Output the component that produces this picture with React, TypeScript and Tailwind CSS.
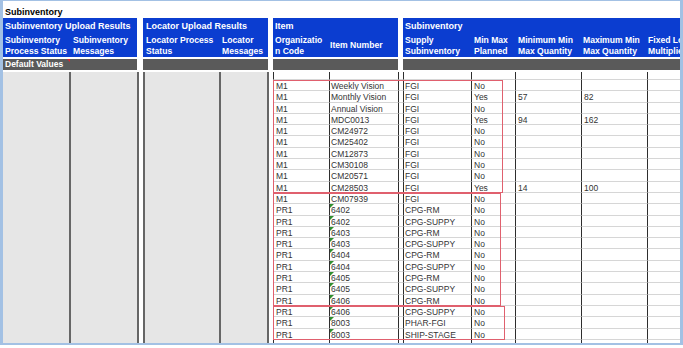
import React from 'react';

type Row = [string, string, string, string, string?, string?];

// rows grouped by the red highlight box drawn around them, with the box width
const groups: { width: string; rows: Row[] }[] = [
  {
    width: 'w-[230px]',
    rows: [
      ['M1', 'Weekly Vision', 'FGI', 'No'],
      ['M1', 'Monthly Vision', 'FGI', 'Yes', '57', '82'],
      ['M1', 'Annual Vision', 'FGI', 'No'],
      ['M1', 'MDC0013', 'FGI', 'Yes', '94', '162'],
      ['M1', 'CM24972', 'FGI', 'No'],
      ['M1', 'CM25402', 'FGI', 'No'],
      ['M1', 'CM12873', 'FGI', 'No'],
      ['M1', 'CM30108', 'FGI', 'No'],
      ['M1', 'CM20571', 'FGI', 'No'],
      ['M1', 'CM28503', 'FGI', 'Yes', '14', '100'],
    ],
  },
  {
    width: 'w-[228px]',
    rows: [
      ['M1', 'CM07939', 'FGI', 'No'],
      ['PR1', '6402', 'CPG-RM', 'No'],
      ['PR1', '6402', 'CPG-SUPPY', 'No'],
      ['PR1', '6403', 'CPG-RM', 'No'],
      ['PR1', '6403', 'CPG-SUPPY', 'No'],
      ['PR1', '6404', 'CPG-RM', 'No'],
      ['PR1', '6404', 'CPG-SUPPY', 'No'],
      ['PR1', '6405', 'CPG-RM', 'No'],
      ['PR1', '6405', 'CPG-SUPPY', 'No'],
      ['PR1', '6406', 'CPG-RM', 'No'],
    ],
  },
  {
    width: 'w-[232px]',
    rows: [
      ['PR1', '6406', 'CPG-SUPPY', 'No'],
      ['PR1', '8003', 'PHAR-FGI', 'No'],
      ['PR1', '8003', 'SHIP-STAGE', 'No'],
    ],
  },
];

const cell = 'pt-[1px] border-b border-b-[#d6d6d6] border-r border-r-[#2e2e2e] overflow-hidden whitespace-nowrap';

// one spreadsheet row across the Item and Subinventory blocks
const DataRow = ({ row, h }: { row?: Row; h: string }) => {
  const [org, item, supply, planned, min, max] = row ?? ['', '', '', ''];
  const numeric = /^\d+$/.test(item);
  return (
    <div className={`flex shrink-0 ${h}`}>
      <div className={`w-[57px] border-l border-l-[#2e2e2e] pl-[2px] ${cell}`}>{org}</div>
      <div className={`relative w-[69px] pl-[1px] ${cell}`}>
        {numeric && (
          <span className="absolute left-0 top-0 border-t-[4px] border-r-[4px] border-t-[#2f8f2f] border-r-transparent" />
        )}
        {item}
      </div>
      <div className="w-[4px] border-b border-b-[#d6d6d6]" />
      <div className={`w-[69px] border-l border-l-[#2e2e2e] pl-[1px] ${cell}`}>{supply}</div>
      <div className={`w-[44px] pl-[2px] ${cell}`}>{planned}</div>
      <div className={`w-[66px] pl-[2px] ${cell}`}>{min}</div>
      <div className={`w-[66px] pl-[2px] ${cell}`}>{max}</div>
      <div className="flex-1 border-b border-b-[#d6d6d6]" />
    </div>
  );
};

const SubHead = ({ w, pad, lines }: { w: string; pad: string; lines: string[] }) => (
  <div className={`${w} ${pad} flex flex-col justify-center leading-[10.5px] whitespace-nowrap`}>
    {lines.map((l) => (
      <span key={l}>{l}</span>
    ))}
  </div>
);

export default function App() {
  return (
    <div className="w-[683px] h-[348px] bg-white overflow-hidden font-['Liberation_Sans',Arial,sans-serif]">
      <div className="w-[683px] h-[345px] border-t border-l-[3px] border-r-[3px] border-b-2 border-[#a3c1e4] flex flex-col">
        {/* sheet title */}
        <div className="h-[17px] shrink-0 pl-[2px] pt-[6px] text-[9px] font-bold leading-[10px] text-black">Subinventory</div>

        {/* blue header blocks */}
        <div className="flex h-[39px] shrink-0 text-white">
          <div className="w-[134px] bg-[#0b3dd0] flex flex-col">
            <div className="h-[16px] pl-[2px] pt-[3px] text-[9px] font-bold leading-[11px]">Subinventory Upload Results</div>
            <div className="flex flex-1 text-[8.6px] font-bold">
              <SubHead w="w-[68px]" pad="pl-[2px]" lines={['Subinventory', 'Process Status']} />
              <SubHead w="flex-1" pad="pl-[2px]" lines={['Subinventory', 'Messages']} />
            </div>
          </div>
          <div className="w-[6px]" />
          <div className="w-[125px] bg-[#0b3dd0] flex flex-col">
            <div className="h-[16px] pl-[3px] pt-[3px] text-[9px] font-bold leading-[11px]">Locator Upload Results</div>
            <div className="flex flex-1 text-[8.6px] font-bold">
              <SubHead w="w-[76px]" pad="pl-[3px]" lines={['Locator Process', 'Status']} />
              <SubHead w="flex-1" pad="pl-[3px]" lines={['Locator', 'Messages']} />
            </div>
          </div>
          <div className="w-[5px]" />
          <div className="w-[125px] bg-[#0b3dd0] flex flex-col">
            <div className="h-[16px] pl-[2px] pt-[3px] text-[9px] font-bold leading-[11px]">Item</div>
            <div className="flex flex-1 text-[8.6px] font-bold">
              <SubHead w="w-[57px]" pad="pl-[2px]" lines={['Organizatio', 'n Code']} />
              <SubHead w="flex-1" pad="pl-0" lines={['Item Number']} />
            </div>
          </div>
          <div className="w-[5px]" />
          <div className="flex-1 bg-[#0b3dd0] flex flex-col overflow-hidden">
            <div className="h-[16px] pl-[2px] pt-[3px] text-[9px] font-bold leading-[11px]">Subinventory</div>
            <div className="flex flex-1 text-[8.6px] font-bold">
              <SubHead w="w-[69px] shrink-0" pad="pl-[2px]" lines={['Supply', 'Subinventory']} />
              <SubHead w="w-[44px] shrink-0" pad="pl-[2px]" lines={['Min Max', 'Planned']} />
              <SubHead w="w-[66px] shrink-0" pad="pl-[2px]" lines={['Minimum Min', 'Max Quantity']} />
              <SubHead w="w-[66px] shrink-0" pad="pl-[1px]" lines={['Maximum Min', 'Max Quantity']} />
              <SubHead w="w-[60px] shrink-0" pad="pl-0" lines={['Fixed Lot', 'Multiplier']} />
            </div>
          </div>
        </div>

        {/* default values bar */}
        <div className="flex h-[11px] shrink-0 mt-[2px] text-white">
          <div className="relative w-[134px] bg-[#5a5a5a] pl-[2px] text-[8.5px] font-bold leading-[11px]">
            Default Values
            <span className="absolute left-[64px] top-0 border-t-[3px] border-l-[3px] border-t-[#e0202a] border-l-transparent" />
          </div>
          <div className="w-[6px]" />
          <div className="w-[125px] bg-[#5a5a5a]" />
          <div className="w-[5px]" />
          <div className="w-[125px] bg-[#5a5a5a]" />
          <div className="w-[5px]" />
          <div className="flex-1 bg-[#5a5a5a]" />
        </div>

        {/* body */}
        <div className="flex flex-1 mt-[2px]">
          <div className="w-[68px] bg-[#e6e6e6] border-r-2 border-[#666]" />
          <div className="w-[68px] bg-[#e6e6e6] border-r-2 border-[#666]" />
          <div className="w-[4px]" />
          <div className="w-[78px] bg-[#e6e6e6] border-l-2 border-r-2 border-[#666]" />
          <div className="w-[48px] bg-[#e6e6e6] border-r-2 border-[#666]" />
          <div className="w-[4px]" />
          <div className="flex-1 flex flex-col text-[8.5px] leading-[10px] text-[#333]">
            <DataRow h="h-[8px]" />
            {groups.map((g, gi) => (
              <div key={gi} className="relative flex flex-col">
                {g.rows.map((r, i) => (
                  <DataRow key={i} row={r} h="h-[11.3px]" />
                ))}
                <div className={`absolute left-0 top-0 bottom-0 ${g.width} border border-[#e0606e]`} />
              </div>
            ))}
            <div className="flex-1 flex">
              <div className="w-[57px] border-l border-r border-[#2e2e2e]" />
              <div className="w-[69px] border-r border-[#2e2e2e]" />
              <div className="w-[4px]" />
              <div className="w-[69px] border-l border-r border-[#2e2e2e]" />
              <div className="w-[44px] border-r border-[#2e2e2e]" />
              <div className="w-[66px] border-r border-[#2e2e2e]" />
              <div className="w-[66px] border-r border-[#2e2e2e]" />
            </div>
          </div>
        </div>
      </div>
    </div>
  );
}
